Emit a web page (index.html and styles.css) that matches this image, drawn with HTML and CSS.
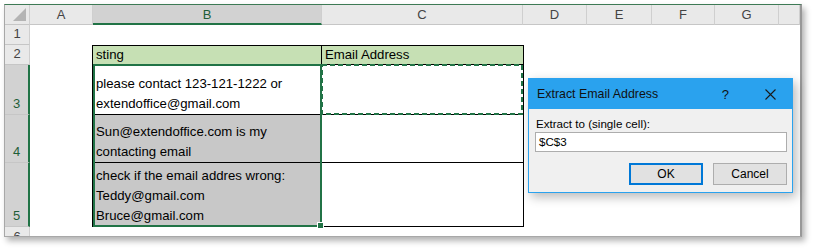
FILE: index.html
```html
<!DOCTYPE html>
<html lang="en">

<head>
    <meta charset="UTF-8">
    <meta name="viewport" content="width=device-width, initial-scale=1.0">
    <title>Extract Email Address</title>
    <link rel="stylesheet" href="styles.css">
</head>

<body>

    <div class="sheet">
        <div class="grid">
            <div class="corner">
                <svg width="13" height="13" viewBox="0 0 13 13"><polygon points="13,0 13,13 0,13" fill="#b4b4b4"/></svg>
            </div>
            <div class="colhead">A</div>
            <div class="colhead active">B</div>
            <div class="colhead">C</div>
            <div class="colhead">D</div>
            <div class="colhead">E</div>
            <div class="colhead">F</div>
            <div class="colhead">G</div>
            <div class="colhead"></div>

            <div class="rowhead">1</div>

            <div class="rowhead">2</div>
            <div></div>
            <div class="cell t top colb title">sting</div>
            <div class="cell t top colc title">Email Address</div>

            <div class="rowhead active">3</div>
            <div></div>
            <div class="cell t colb">please contact 123-121-1222 or<br>extendoffice@gmail.com</div>
            <div class="cell t colc"></div>

            <div class="rowhead active">4</div>
            <div></div>
            <div class="cell t colb shade">Sun@extendoffice.com is my<br>contacting email</div>
            <div class="cell t colc"></div>

            <div class="rowhead active">5</div>
            <div></div>
            <div class="cell t colb shade">check if the email addres wrong:<br>Teddy@gmail.com<br>Bruce@gmail.com</div>
            <div class="cell t colc"></div>

            <div class="rowhead last">6</div>

            <!-- overlays: selected range and copy marquee -->
            <div class="selection"><span class="handle"></span></div>
            <div class="marquee">
                <svg width="202" height="51"><rect x="1" y="1" width="200" height="49" fill="none" stroke="#217346" stroke-width="2" stroke-dasharray="5 3"/></svg>
            </div>
        </div>
    </div>

    <div class="dialog">
        <div class="dialog-title">
            <span>Extract Email Address</span>
            <div class="dialog-icons">
                <span class="help">?</span>
                <svg width="11" height="11" viewBox="0 0 11 11"><path d="M0.5 0.5 L10.5 10.5 M10.5 0.5 L0.5 10.5" stroke="#1a1a1a" stroke-width="1.1"/></svg>
            </div>
        </div>
        <div class="dialog-body">
            <label>Extract to (single cell):</label>
            <div class="field">$C$3</div>
            <div class="buttons">
                <button class="primary">OK</button>
                <button>Cancel</button>
            </div>
        </div>
    </div>

</body>

</html>
```

FILE: styles.css
```css
* {
    margin: 0;
    padding: 0;
    box-sizing: border-box;
}

html,
body {
    width: 100%;
    height: 100%;
    background: #fff;
    font-family: "Liberation Sans", Arial, sans-serif;
    overflow: hidden;
}

body {
    position: relative;
    padding: 4px 0 0 4px;
}

.sheet {
    width: 798px;
    height: 233px;
    border: 1px solid #a8a8a8;
    border-top-color: #3d7a55;
    border-right: 2px solid #989898;
    box-shadow: 3px 4px 6px rgba(0, 0, 0, 0.3);
    overflow: hidden;
}

.grid {
    position: relative;
    display: grid;
    grid-template-columns: 25px 63px 229px 201px 64px 65px 63px 64px 21px;
    grid-template-rows: 20px 20px 20px 50px 48px 64px 9px;
    font-size: 13.2px;
    color: #000;
}

.corner,
.colhead,
.rowhead {
    background: #e9e9e9;
    border-right: 1px solid #cfcfcf;
    border-bottom: 1px solid #c6c6c6;
    color: #444;
    font-size: 13px;
}

.corner {
    display: flex;
    align-items: flex-end;
    justify-content: flex-end;
    padding: 0 3px 3px 0;
}

.colhead {
    display: flex;
    align-items: center;
    justify-content: center;
}

.colhead.active {
    background: #d2d2d2;
    color: #1e5e38;
    border-bottom: 2px solid #217346;
}

.rowhead {
    grid-column: 1;
    display: flex;
    align-items: flex-end;
    justify-content: center;
    line-height: 20px;
    overflow: hidden;
}

.rowhead.active {
    background: #d2d2d2;
    color: #1e5e38;
    border-right: 2px solid #217346;
}

.rowhead.last {
    align-items: flex-start;
    border-bottom: 0;
}

.cell {
    display: flex;
    flex-direction: column;
    justify-content: flex-end;
    padding: 0 3px;
    line-height: 20px;
    white-space: nowrap;
    overflow: hidden;
}

.t {
    border-right: 1px solid #000;
    border-bottom: 1px solid #000;
}

.t.top {
    border-top: 1px solid #000;
}

.t.colb {
    border-left: 1px solid #000;
    margin-left: -1px;
}

.t.colc {
    margin-right: -1px;
}

.title {
    background: #c6e0b4;
    justify-content: center;
    line-height: 18px;
}

.shade {
    background: #c8c8c8;
}

.selection {
    position: absolute;
    grid-column: 3 / 4;
    grid-row: 4 / 7;
    inset: -1px 0 0 0;
    border: 2px solid #217346;
}

.handle {
    position: absolute;
    right: -4px;
    bottom: -4px;
    width: 7px;
    height: 7px;
    background: #217346;
    border: 1px solid #fff;
}

.marquee {
    position: absolute;
    grid-column: 4 / 5;
    grid-row: 4 / 5;
    top: -1px;
    left: -1px;
}

.marquee svg {
    display: block;
}

/* dialog */

.dialog {
    position: absolute;
    left: 528px;
    top: 78px;
    width: 265px;
    height: 115px;
    background: #f0f0f0;
    border: 1px solid #2aa2ee;
    box-shadow: 3px 4px 10px rgba(0, 0, 0, 0.28);
    font-size: 11.6px;
    color: #000;
}

.dialog-title {
    height: 30px;
    background: #2aa2ee;
    display: flex;
    align-items: center;
    justify-content: space-between;
    padding: 0 16px 0 8px;
    font-size: 12.4px;
    color: #111;
}

.dialog-icons {
    display: flex;
    align-items: center;
    gap: 36px;
}

.help {
    font-size: 13px;
}

.dialog-icons svg {
    display: block;
}

.dialog-body {
    display: flex;
    flex-direction: column;
    padding: 8px 5px 0 6px;
}

.dialog-body label {
    line-height: 13px;
    padding-left: 1px;
}

.field {
    margin-top: 2px;
    height: 20px;
    background: #fff;
    border: 1px solid #adadad;
    padding: 0 3px;
    line-height: 18px;
}

.buttons {
    display: flex;
    justify-content: flex-end;
    gap: 10px;
    margin-top: 11px;
}

.buttons button {
    width: 74px;
    height: 22px;
    background: #e1e1e1;
    border: 1px solid #adadad;
    font-family: inherit;
    font-size: 12px;
    color: #000;
}

.buttons button.primary {
    border: 2px solid #0078d7;
}
```
